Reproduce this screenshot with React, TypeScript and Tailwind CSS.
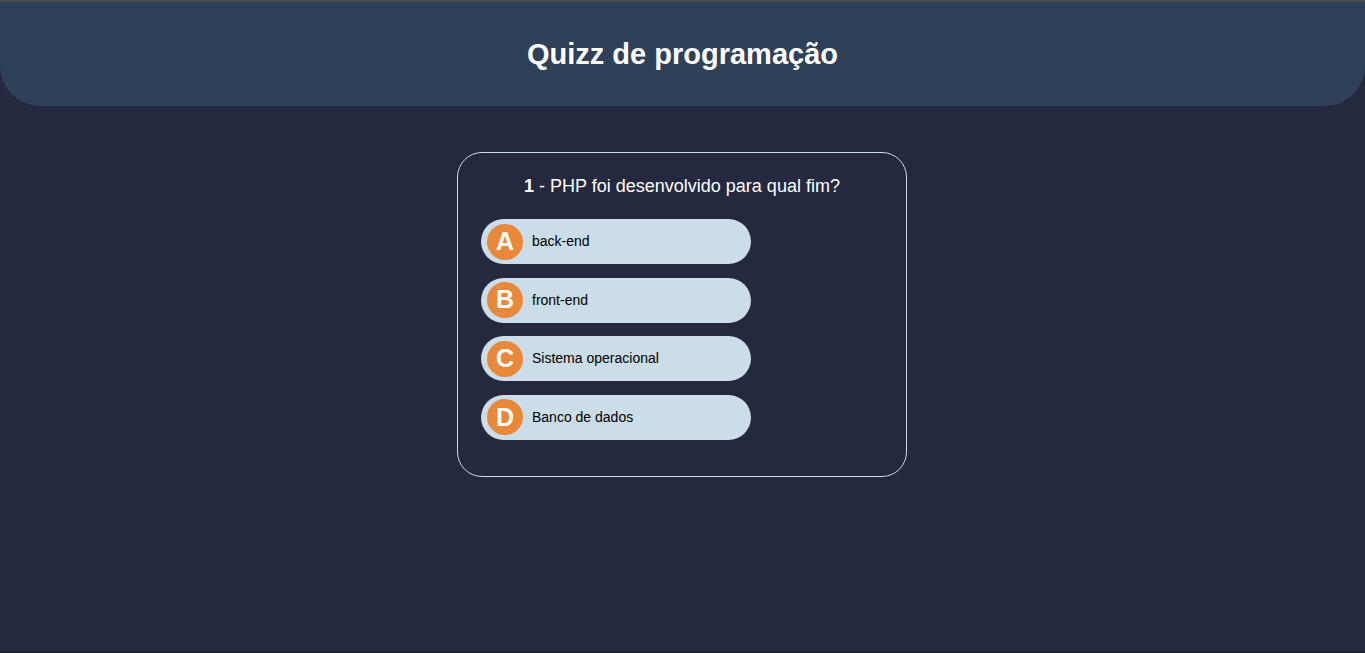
const options = [
  { letter: "A", text: "back-end" },
  { letter: "B", text: "front-end" },
  { letter: "C", text: "Sistema operacional" },
  { letter: "D", text: "Banco de dados" },
];

const App = () => {
  return (
    <div className="flex h-[653px] flex-col border-t-2 border-b border-t-[#4b4b4b] border-b-[#1a1a1a] bg-[#24293f] font-['Liberation_Sans',Arial,sans-serif]">
      <header className="flex h-[104px] items-center justify-center rounded-b-[40px] bg-[#2e4159]">
        <h1 className="pt-[2px] text-[29px] font-bold text-white">Quizz de programação</h1>
      </header>
      <main className="flex justify-center pr-px pt-[46px]">
        <div className="flex h-[325px] w-[450px] flex-col rounded-[25px] border border-[#cbdde8] px-[23px] pt-[20px]">
          <h2 className="text-center text-[18px] leading-[27px] text-white">
            <span className="font-bold">1</span> - PHP foi desenvolvido para qual fim?
          </h2>
          <div className="mt-[19px] flex flex-col gap-[13.6px]">
            {options.map((o) => (
              <button
                key={o.letter}
                className="flex h-[45px] w-[270px] items-center gap-[9px] rounded-full bg-[#cbdde8] pl-[6px] text-left"
              >
                <span className="flex h-[36px] w-[36px] items-center justify-center rounded-full bg-[#e8883a] text-[25px] font-bold text-white">
                  {o.letter}
                </span>
                <span className="text-[14px] text-black">{o.text}</span>
              </button>
            ))}
          </div>
        </div>
      </main>
    </div>
  );
};

export default App;
